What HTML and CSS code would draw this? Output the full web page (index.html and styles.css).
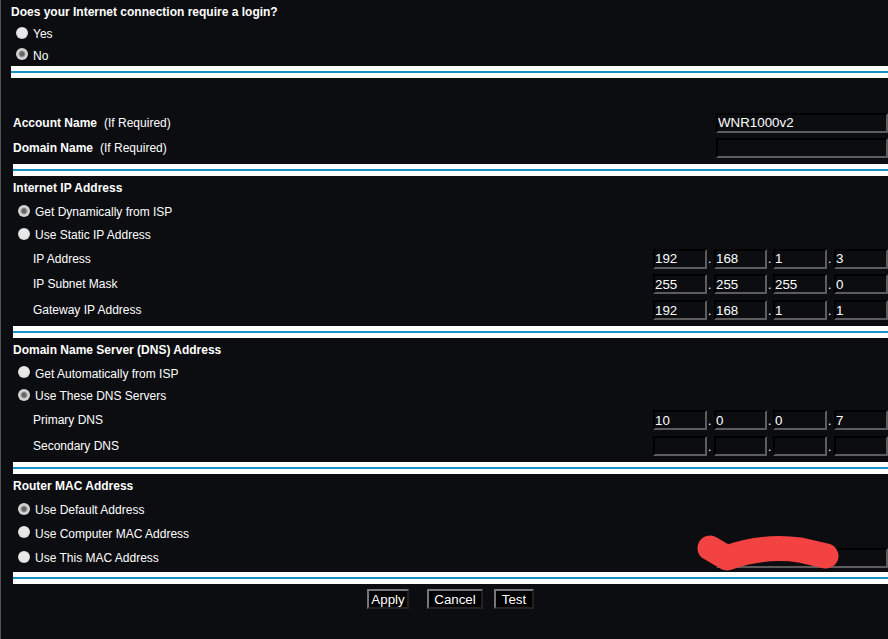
FILE: index.html
```html
<!DOCTYPE html>
<html>
<head>
<meta charset="utf-8">
<link rel="stylesheet" href="styles.css">
</head>
<body>
<div class="page">
  <div class="section first">
    <div class="row h h23">Does your Internet connection require a login?</div>
    <label class="row radio h22"><input type="radio" name="login"><span>Yes</span></label>
    <label class="row radio h21"><input type="radio" name="login" checked><span>No</span></label>
    <div class="sep"></div>
  </div>

  <div class="section">
    <div class="sp32"></div>
    <div class="row h25"><b>Account Name</b><span class="req">(If Required)</span><input class="field wide" type="text" value="WNR1000v2"></div>
    <div class="row h26"><b>Domain Name</b><span class="req">(If Required)</span><input class="field wide" type="text" value=""></div>
    <div class="sp3"></div>
    <div class="sep"></div>
  </div>

  <div class="section">
    <div class="row h h24">Internet IP Address</div>
    <label class="row radio h24"><input type="radio" name="ipmode" checked><span>Get Dynamically from ISP</span></label>
    <label class="row radio h22"><input type="radio" name="ipmode"><span>Use Static IP Address</span></label>
    <div class="row h25"><span class="sub">IP Address</span>
      <div class="ip"><input class="field oct" value="192"><span class="dot">.</span><input class="field oct o2" value="168"><span class="dot d2">.</span><input class="field oct" value="1"><span class="dot">.</span><input class="field oct" value="3"></div>
    </div>
    <div class="row h26"><span class="sub">IP Subnet Mask</span>
      <div class="ip"><input class="field oct" value="255"><span class="dot">.</span><input class="field oct o2" value="255"><span class="dot d2">.</span><input class="field oct" value="255"><span class="dot">.</span><input class="field oct" value="0"></div>
    </div>
    <div class="row h26"><span class="sub">Gateway IP Address</span>
      <div class="ip"><input class="field oct" value="192"><span class="dot">.</span><input class="field oct o2" value="168"><span class="dot d2">.</span><input class="field oct" value="1"><span class="dot">.</span><input class="field oct" value="1"></div>
    </div>
    <div class="sp3"></div>
    <div class="sep"></div>
  </div>

  <div class="section">
    <div class="row h h24">Domain Name Server (DNS) Address</div>
    <label class="row radio h23"><input type="radio" name="dns"><span>Get Automatically from ISP</span></label>
    <label class="row radio h22"><input type="radio" name="dns" checked><span>Use These DNS Servers</span></label>
    <div class="row h26"><span class="sub">Primary DNS</span>
      <div class="ip"><input class="field oct" value="10"><span class="dot">.</span><input class="field oct o2" value="0"><span class="dot d2">.</span><input class="field oct" value="0"><span class="dot">.</span><input class="field oct" value="7"></div>
    </div>
    <div class="row h26"><span class="sub">Secondary DNS</span>
      <div class="ip"><input class="field oct" value=""><span class="dot">.</span><input class="field oct o2" value=""><span class="dot d2">.</span><input class="field oct" value=""><span class="dot">.</span><input class="field oct" value=""></div>
    </div>
    <div class="sp3"></div>
    <div class="sep"></div>
  </div>

  <div class="section">
    <div class="row h h24">Router MAC Address</div>
    <label class="row radio h24"><input type="radio" name="mac" checked><span>Use Default Address</span></label>
    <label class="row radio h23"><input type="radio" name="mac"><span>Use Computer MAC Address</span></label>
    <div class="row radio h26 macrow"><input type="radio" name="mac"><span>Use This MAC Address</span><input class="field wide" type="text" value="">
      <svg class="scribble" viewBox="690 528 160 50" width="160" height="50" aria-hidden="true"><path d="M710 548 L727 558 C746 551 770 546 800 550 L826 556" fill="none" stroke="#f34242" stroke-width="25" stroke-linecap="round" stroke-linejoin="round"/></svg>
    </div>
    <div class="sp1"></div>
    <div class="sep"></div>
  </div>

  <div class="section">
    <div class="sp5"></div>
    <div class="buttons">
      <button class="btn b-apply">Apply</button>
      <button class="btn b-cancel">Cancel</button>
      <button class="btn b-test">Test</button>
    </div>
  </div>
</div>
</body>
</html>
```
FILE: styles.css
```css
* { box-sizing: border-box; }
html, body { margin: 0; padding: 0; }
body {
  background: #0c0d11;
  color: #fff;
  font-family: "Liberation Sans", Arial, sans-serif;
  font-size: 12px;
  line-height: 14px;
  width: 888px;
  height: 639px;
  overflow: hidden;
  border-left: 1px solid #555;
}
.page { padding-left: 12px; display: flex; flex-direction: column; }
.section { display: flex; flex-direction: column; }
.section.first { margin-left: -2px; }
.row { display: flex; align-items: center; flex: none; white-space: nowrap; }
.h { font-weight: bold; }
.h21 { height: 21px; }
.h22 { height: 22px; }
.h23 { height: 23px; }
.h24 { height: 24px; }
.h25 { height: 25px; }
.h26 { height: 26px; }
.sp1 { height: 1px; }
.sp3 { height: 3px; }
.sp5 { height: 5px; }
.sp32 { height: 32px; }
.sep {
  height: 12px;
  background: linear-gradient(#fff 0 5px, #1a90c9 5px 7px, #fff 7px 12px);
}
.radio input[type="radio"] {
  appearance: none;
  -webkit-appearance: none;
  width: 12px;
  height: 12px;
  margin: 0 5px 3px 5px;
  border-radius: 50%;
  flex: none;
  background: radial-gradient(circle at 50% 45%, #e8e8e8 0 50%, #d4d4d4 70%, #ababab 100%);
}
.radio input[type="radio"]:checked {
  background: radial-gradient(circle at 50% 50%, #666 0 22%, #8a8a8a 32%, #cfcfcf 45%, #d6d6d6 62%, #a2a2a2 100%);
}
.req { margin-left: 7px; }
.sub { padding-left: 20px; }
.field {
  height: 20px;
  padding: 0;
  background: #0c0d11;
  color: #fff;
  font-family: "Liberation Sans", Arial, sans-serif;
  font-size: 13.333px;
  border-style: solid;
  border-width: 2px;
  border-color: #000 #5c5c5c #5c5c5c #000;
  outline: none;
}
.wide { width: 172px; margin-left: auto; }
.ip { margin-left: auto; display: flex; align-items: baseline; }
.oct { width: 54px; }
.oct.o2 { width: 53px; }
.dot { width: 7px; font-size: 12px; padding-left: 1px; }
.dot.d2 { width: 6px; }
.macrow { position: relative; }
.scribble { position: absolute; left: 677px; top: -17px; }
.buttons { display: flex; justify-content: center; height: 20px; }
.btn {
  height: 20px;
  padding: 0;
  background: #000;
  color: #fff;
  font-family: "Liberation Sans", Arial, sans-serif;
  font-size: 13.333px;
  border-style: solid;
  border-width: 2px;
  border-color: #777 #222 #222 #777;
  text-align: center;
}
.b-apply { width: 42px; }
.b-cancel { width: 56px; margin-left: 18px; }
.b-test { width: 40px; margin-left: 11px; }
```
